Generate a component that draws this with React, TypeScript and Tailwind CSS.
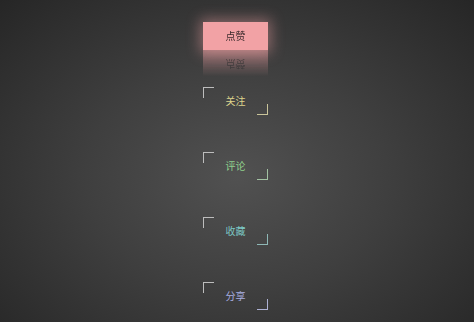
const items = [
  { label: "关注", text: "text-[#ddd48c]", corner: "border-[#c9c49a]" },
  { label: "评论", text: "text-[#8fcf8c]", corner: "border-[#a3c2a3]" },
  { label: "收藏", text: "text-[#7cc7c4]", corner: "border-[#8fb8b6]" },
  { label: "分享", text: "text-[#a9b0e4]", corner: "border-[#aeb2d4]" },
];

export default function App() {
  return (
    <div
      className="w-[474px] h-[322px] overflow-hidden bg-[radial-gradient(ellipse_at_50%_55%,#515151_0%,#3f3f3f_45%,#262626_100%)]"
      style={{ fontFamily: '"Noto Sans CJK SC", "Noto Sans", sans-serif' }}
    >
      <div className="flex flex-col gap-[37px] pt-[22px] ml-[203px] w-[65px]">
        {/* active button */}
        <button className="h-[28px] w-[65px] bg-[#f2a2a5] text-[#3a2a2b] text-[10px] leading-none shadow-[0_0_14px_3px_rgba(242,162,165,0.45)] [-webkit-box-reflect:below_0_linear-gradient(transparent_5%,rgba(0,0,0,0.5))]">
          点赞
        </button>

        {items.map((it) => (
          <div
            key={it.label}
            className={`relative h-[28px] w-[65px] flex items-center justify-center text-[10px] leading-none ${it.text}`}
          >
            <span className="absolute left-0 top-0 w-[11px] h-[11px] border-t border-l border-[#bdbdbd]" />
            <span className={`absolute right-0 bottom-0 w-[11px] h-[11px] border-b border-r ${it.corner}`} />
            {it.label}
          </div>
        ))}
      </div>
    </div>
  );
}
